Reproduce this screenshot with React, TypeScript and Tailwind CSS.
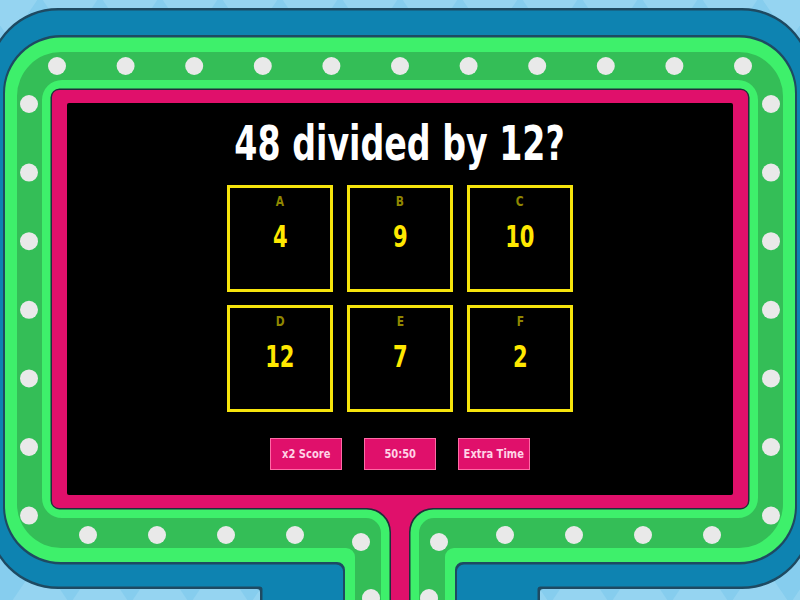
type Layer = {
  l: number;
  t: number;
  r: number;
  b: number;
  rad: number;
  sl: number;
  sr: number;
  f: number;
  fill: string;
};

// frame outline: rounded rect + stem going down at the centre
function framePath({ l, t, r, b, rad, sl, sr, f }: Layer) {
  return `M${l + rad} ${t} H${r - rad} A${rad} ${rad} 0 0 1 ${r} ${t + rad} V${b - rad} A${rad} ${rad} 0 0 1 ${r - rad} ${b} H${sr + f} A${f} ${f} 0 0 0 ${sr} ${b + f} V660 H${sl} V${b + f} A${f} ${f} 0 0 0 ${sl - f} ${b} H${l + rad} A${rad} ${rad} 0 0 1 ${l} ${b - rad} V${t + rad} A${rad} ${rad} 0 0 1 ${l + rad} ${t} Z`;
}

const layers: Layer[] = [
  { l: -12, t: 8, r: 812, b: 589, rad: 70, sl: 260, sr: 540, f: 3, fill: "#1e4a62" },
  { l: -10, t: 10.5, r: 810, b: 586.5, rad: 68, sl: 262.5, sr: 537.5, f: 3, fill: "#0e83b1" },
  { l: 3, t: 35, r: 797, b: 564.5, rad: 58, sl: 343, sr: 457, f: 7, fill: "#1e4a62" },
  { l: 5, t: 37.5, r: 795, b: 562, rad: 56, sl: 345, sr: 455, f: 8, fill: "#3ef06b" },
  { l: 17, t: 52, r: 783, b: 548, rad: 44, sl: 355, sr: 445, f: 9, fill: "#34be57" },
  { l: 42, t: 80, r: 758, b: 518, rad: 20, sl: 381, sr: 419, f: 15, fill: "#3ef06b" },
  { l: 50.5, t: 88.5, r: 749.5, b: 509.5, rad: 9, sl: 389.5, sr: 410.5, f: 23, fill: "#1f2f3a" },
  { l: 52, t: 90, r: 748, b: 508, rad: 7, sl: 391, sr: 409, f: 24, fill: "#e0106b" },
];

const step = 68.6;
const dots: [number, number][] = [
  ...Array.from({ length: 11 }, (_, i) => [57 + i * step, 66] as [number, number]),
  ...Array.from({ length: 7 }, (_, i) => [29, 104 + i * step] as [number, number]),
  ...Array.from({ length: 7 }, (_, i) => [771, 104 + i * step] as [number, number]),
  ...[88, 157, 226, 295, 505, 574, 643, 712].map((x) => [x, 535] as [number, number]),
  [361, 542],
  [439, 542],
  [371, 598],
  [429, 598],
];

const triangles = Array.from({ length: 14 }, (_, i) => i * 60 - 20);

function StageFrame() {
  return (
    <svg className="absolute inset-0" width="800" height="600" viewBox="0 0 800 600">
      <rect width="800" height="600" fill="#86cdee" />
      {triangles.map((x) => (
        <g key={x}>
          <polygon points={`${x},-4 ${x + 30},40 ${x + 60},-4`} fill="#9bd7f2" opacity="0.7" />
          <polygon points={`${x + 30},604 ${x + 60},560 ${x + 90},604`} fill="#9bd7f2" opacity="0.7" />
        </g>
      ))}
      {layers.map((layer, i) => (
        <path key={i} d={framePath(layer)} fill={layer.fill} />
      ))}
      {dots.map(([x, y], i) => (
        <circle key={i} cx={x} cy={y} r="9" fill="#e9e9e9" />
      ))}
    </svg>
  );
}

const answers = [
  { letter: "A", value: "4" },
  { letter: "B", value: "9" },
  { letter: "C", value: "10" },
  { letter: "D", value: "12" },
  { letter: "E", value: "7" },
  { letter: "F", value: "2" },
];

const powerUps = ["x2 Score", "50:50", "Extra Time"];

export default function App() {
  return (
    <div className="relative h-[600px] w-[800px] overflow-hidden bg-[#86cdee] [font-family:'DejaVu_Sans_Condensed','DejaVu_Sans',sans-serif]">
      <StageFrame />
      <div className="relative flex h-full flex-col px-[67px] pb-[105px] pt-[103px]">
        <div className="flex flex-1 flex-col items-center rounded-[2px] bg-black">
          <h1 className="mt-[16px] scale-x-[0.77] whitespace-nowrap text-[48px] font-bold leading-[48px] text-white">
            48 divided by 12?
          </h1>
          <div className="mt-[18px] grid grid-cols-3 gap-x-[14px] gap-y-[13px]">
            {answers.map((a) => (
              <div
                key={a.letter}
                className="flex h-[107px] w-[106px] flex-col items-center border-[3px] border-[#f6e40c] pt-[6px]"
              >
                <span className="scale-x-[0.85] text-[14px] font-bold leading-[14px] text-[#8f8700]">{a.letter}</span>
                <span className="mt-[14px] scale-x-[0.78] text-[30px] font-bold leading-[30px] text-[#ffe800]">
                  {a.value}
                </span>
              </div>
            ))}
          </div>
          <div className="mt-[26px] flex gap-[22px]">
            {powerUps.map((p) => (
              <button
                key={p}
                className="flex h-[32px] w-[72px] items-center justify-center border border-[#ff6aa6] bg-[#e0106b] text-[12px] font-bold text-[#ffd3e6]"
              >
                <span className="scale-x-[0.92] whitespace-nowrap">{p}</span>
              </button>
            ))}
          </div>
        </div>
      </div>
    </div>
  );
}
